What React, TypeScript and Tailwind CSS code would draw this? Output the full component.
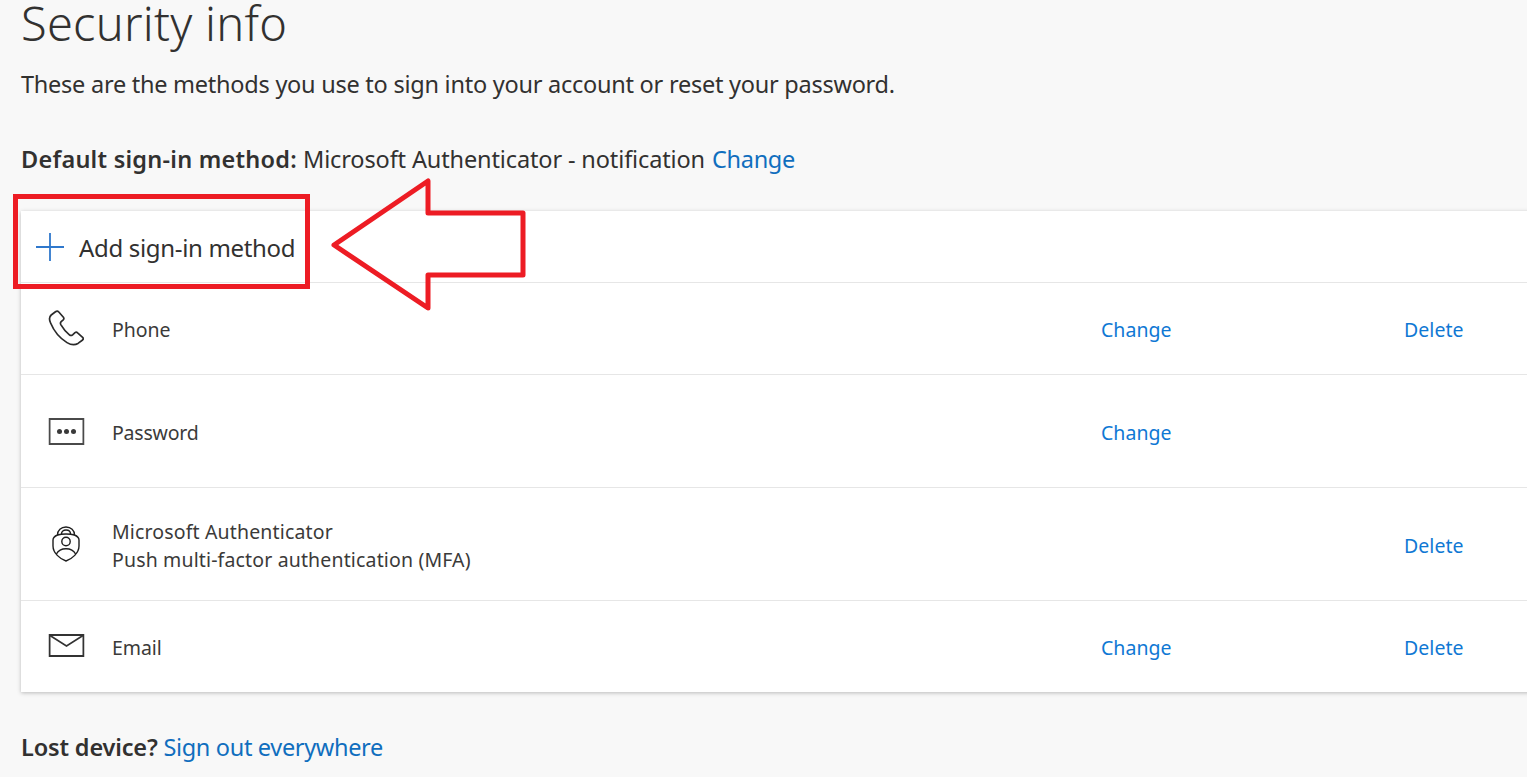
import React from "react";

function PhoneIcon() {
  return (
    <svg width="36" height="36" viewBox="0 0 36 36" fill="none" stroke="#2b2b2b" strokeWidth="1.7" strokeLinejoin="round">
      <path d="M7.5 1.8 L3.2 5 C1 7 1.2 10 2.6 13 C5.5 20 11.5 28 19 32.6 C23 35 27 35.2 30 33.4 L34.6 30 C35.4 29.2 35.4 28.2 34.6 27.3 L29.6 22.8 C28.8 22 27.8 22 27 22.6 L24.6 24.8 C23.6 25.6 22.4 25.6 21.4 24.8 C18 22 15 18.4 12.8 14.6 C12.2 13.4 12.4 12.4 13.2 11.6 L15.2 9.8 C16 9 16 8 15.4 7.2 L10.8 2 C9.8 1 8.6 1 7.5 1.8 Z" />
    </svg>
  );
}

function PasswordIcon() {
  return (
    <svg width="36" height="27" viewBox="0 0 36 27">
      <rect x="1" y="1" width="34" height="25" fill="none" stroke="#4a4a4a" strokeWidth="2" />
      <circle cx="11" cy="13.5" r="2.5" fill="#3a3a3a" />
      <circle cx="18" cy="13.5" r="2.5" fill="#3a3a3a" />
      <circle cx="25" cy="13.5" r="2.5" fill="#3a3a3a" />
    </svg>
  );
}

function AuthIcon() {
  return (
    <svg width="28" height="36" viewBox="0 0 28 36" fill="none" stroke="#1f1f1f" strokeWidth="1.4">
      <path d="M14 1 C19 1 22.5 4.5 22.5 9 C25 10 27 11.5 27 14 L27 20 C27 27 20 33 14 35 C8 33 1 27 1 20 L1 14 C1 11.5 3 10 5.5 9 C5.5 4.5 9 1 14 1 Z" />
      <path d="M5.5 9 C10 7.6 18 7.6 22.5 9" />
      <path d="M9.5 8 C9.5 5.4 11.5 4 14 4 C16.5 4 18.5 5.4 18.5 8" />
      <circle cx="14" cy="15.5" r="4.2" />
      <path d="M4.4 28 C6.5 24 10 22.8 14 22.8 C18 22.8 21.5 24 23.6 28" />
    </svg>
  );
}

function EmailIcon() {
  return (
    <svg width="36" height="23" viewBox="0 0 36 23" fill="none" stroke="#333333">
      <rect x="1" y="1" width="34" height="21" strokeWidth="2" />
      <path d="M1.5 1.5 L18 12 L34.5 1.5" strokeWidth="1.6" />
    </svg>
  );
}

function Link({ children }: { children: React.ReactNode }) {
  return <a className="text-[#0f78d4] text-[19.5px] leading-[26px] tracking-[0.05px]">{children}</a>;
}

function Row({
  icon,
  height,
  iconClass,
  textPad,
  children,
  change,
  del,
  border,
}: {
  icon: React.ReactNode;
  height: string;
  iconClass: string;
  textPad: string;
  children: React.ReactNode;
  change?: boolean;
  del?: boolean;
  border?: boolean;
}) {
  return (
    <div className={`flex items-center ${height} ${border ? "border-b border-[#e6e6e6]" : ""}`}>
      <div className={`w-[91px] shrink-0 flex justify-center ${iconClass}`}>{icon}</div>
      <div className={`w-[989px] shrink-0 text-[19.5px] leading-[28px] text-[#3b3a39] ${textPad}`}>{children}</div>
      <div className={`w-[303px] shrink-0 ${textPad}`}>{change && <Link>Change</Link>}</div>
      <div className={`shrink-0 ${textPad}`}>{del && <Link>Delete</Link>}</div>
    </div>
  );
}

export default function App() {
  return (
    <div className="relative w-[1527px] h-[777px] overflow-hidden bg-[#f8f8f8] font-['Noto_Sans',sans-serif] text-[#323130]">
      <h1 className="pl-[21px] h-[50px] text-[47px] leading-[46px] font-light text-[#323130] tracking-[0.25px]">Security info</h1>
      <p className="pl-[21px] mt-[19px] h-[30px] text-[23.5px] leading-[30px] tracking-[-0.25px]">
        These are the methods you use to sign into your account or reset your password.
      </p>
      <p className="pl-[21px] mt-[45px] h-[30px] text-[23.5px] leading-[30px] tracking-[-0.13px]">
        <b className="font-semibold tracking-[0.24px]">Default sign-in method:</b> Microsoft Authenticator - notification{" "}
        <a className="text-[#106ebe] tracking-[-0.3px] ml-px">Change</a>
      </p>
      <div className="ml-[21px] mt-[37px] w-[1600px] h-[481px] bg-white shadow-[0_1px_4px_rgba(0,0,0,0.25)]">
        <div className="flex items-center h-[72px] border-b border-[#e6e6e6]">
          <svg width="28" height="28" viewBox="0 0 28 28" className="ml-[15px]" stroke="#2f78cc" strokeWidth="1.8">
            <path d="M14 0 V28 M0 14 H28" />
          </svg>
          <span className="ml-[15px] pt-[2px] text-[24px] leading-[30px] tracking-[-0.33px]">Add sign-in method</span>
        </div>
        <Row icon={<PhoneIcon />} iconClass="-translate-x-[1px] -translate-y-[1px]" textPad="pt-[2px]" height="h-[92px]" change del border>
          <span className="tracking-[-0.05px]">Phone</span>
        </Row>
        <Row icon={<PasswordIcon />} iconClass="-translate-x-[0.5px]" textPad="pt-[4px]" height="h-[113px]" change border>
          <span className="tracking-[-0.2px]">Password</span>
        </Row>
        <Row icon={<AuthIcon />} iconClass="-translate-x-[1px]" textPad="pt-[4px]" height="h-[113px]" del border>
          <span className="tracking-[0.15px]">
            Microsoft Authenticator
            <br />
            Push multi-factor authentication (MFA)
          </span>
        </Row>
        <Row icon={<EmailIcon />} iconClass="-translate-x-[0.5px] -translate-y-[1px]" textPad="pt-[2px]" height="h-[91px]" change del>
          <span className="tracking-[-0.05px]">Email</span>
        </Row>
      </div>
      <p className="pl-[21px] mt-[40px] h-[30px] text-[23.5px] leading-[30px] tracking-[-0.33px]">
        <b className="font-semibold tracking-[-0.15px]">Lost device?</b> <a className="text-[#106ebe]">Sign out everywhere</a>
      </p>
      <svg className="absolute left-0 top-0 pointer-events-none" width="1527" height="777" fill="none" stroke="#ed1c24" strokeWidth="5">
        <rect x="15.5" y="196.5" width="292" height="90" />
        <path d="M334 245 L428 181 V213 L523 213 V275 H428 V308 Z" strokeLinejoin="round" />
      </svg>
    </div>
  );
}
